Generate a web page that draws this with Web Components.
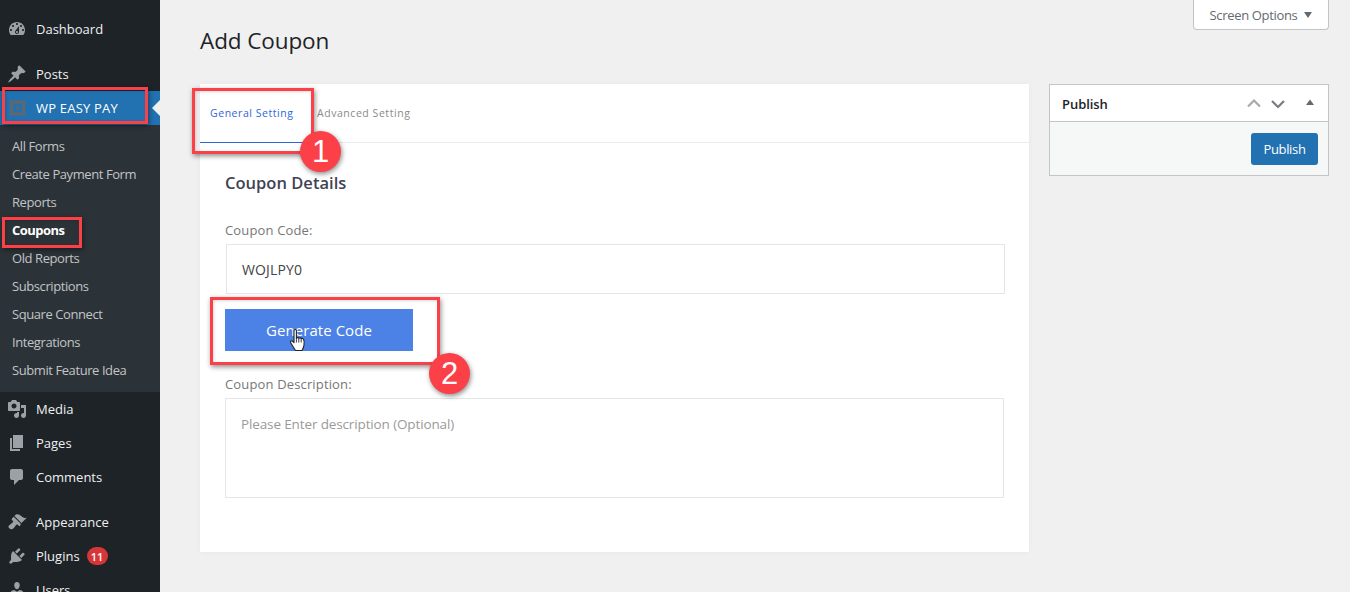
<!DOCTYPE html>
<html><head><meta charset="utf-8"><title>Add Coupon</title>
<style>
html,body{margin:0;height:592px;overflow:hidden;background:#f0f0f1;font-family:"Open Sans","Noto Sans",sans-serif;}
body{display:flex;align-items:stretch;position:relative}
</style></head>
<body>
<wp-sidebar>
  <wp-item icon="dashboard">Dashboard</wp-item>
  <wp-sep></wp-sep>
  <wp-item icon="pin">Posts</wp-item>
  <wp-item icon="square" current>WP EASY PAY</wp-item>
  <wp-submenu>
    <wp-subitem>All Forms</wp-subitem>
    <wp-subitem>Create Payment Form</wp-subitem>
    <wp-subitem>Reports</wp-subitem>
    <wp-subitem current>Coupons</wp-subitem>
    <wp-subitem>Old Reports</wp-subitem>
    <wp-subitem>Subscriptions</wp-subitem>
    <wp-subitem>Square Connect</wp-subitem>
    <wp-subitem>Integrations</wp-subitem>
    <wp-subitem>Submit Feature Idea</wp-subitem>
  </wp-submenu>
  <wp-item icon="media">Media</wp-item>
  <wp-item icon="page">Pages</wp-item>
  <wp-item icon="comment">Comments</wp-item>
  <wp-sep></wp-sep>
  <wp-item icon="brush">Appearance</wp-item>
  <wp-item icon="plugin" badge="11">Plugins</wp-item>
  <wp-item icon="users">Users</wp-item>
</wp-sidebar>
<wp-main>
  <coupon-card></coupon-card>
  <publish-box></publish-box>
</wp-main>
<anno-layer></anno-layer>
<script>
const ICONS={
dashboard:'<path d="M3.76 16h12.48c1.1-1.37 1.76-3.11 1.76-5 0-4.42-3.58-8-8-8s-8 3.58-8 8c0 1.89.66 3.63 1.76 5zM10 4c.55 0 1 .45 1 1s-.45 1-1 1-1-.45-1-1 .45-1 1-1zM6 6c.55 0 1 .45 1 1s-.45 1-1 1-1-.45-1-1 .45-1 1-1zm8 0c.55 0 1 .45 1 1s-.45 1-1 1-1-.45-1-1 .45-1 1-1zm-5.37 5.55L12 7v6c0 1.1-.9 2-2 2s-2-.9-2-2c0-.57.24-1.08.63-1.45zM4 10c.55 0 1 .45 1 1s-.45 1-1 1-1-.45-1-1 .45-1 1-1zm12 0c.55 0 1 .45 1 1s-.45 1-1 1-1-.45-1-1 .45-1 1-1zm-5 3c0-.55-.45-1-1-1s-1 .45-1 1 .45 1 1 1 1-.45 1-1z" fill-rule="evenodd"/>',
pin:'<path d="M10.44 3.02l1.82-1.82 6.36 6.35-1.83 1.82c-1.05-.68-2.48-.57-3.41.36l-.75.75c-.92.93-1.04 2.35-.35 3.41l-1.83 1.82-2.41-2.41-2.8 2.79c-.42.42-3.38 2.71-3.8 2.29s1.86-3.39 2.28-3.81l2.79-2.79L4.1 9.36l1.83-1.82c1.05.69 2.48.57 3.4-.36l.75-.75c.93-.92 1.05-2.35.36-3.41z"/>',
square:'<path fill-rule="evenodd" d="M3 2.500h15v15H3zM6 5.500v9h9v-9zM8.800 8.300h3.400v3.400H8.800z" fill="#63676c"/>',
media:'<path fill-rule="evenodd" d="M13 11V4c0-.55-.45-1-1-1h-1.67L9 1H5L3.67 3H2c-.55 0-1 .45-1 1v7c0 .55.45 1 1 1h10c.55 0 1-.45 1-1zM7 4.500c1.380 0 2.500 1.120 2.500 2.500S8.380 9.500 7 9.500 4.500 8.380 4.500 7 5.620 4.500 7 4.500zM14 6h5v10.500c0 1.380-1.120 2.500-2.500 2.500S14 17.880 14 16.500s1.120-2.500 2.500-2.500c.17 0 .34.02.5.05V9h-3V6zm-4 8.050V13h2v3.500c0 1.380-1.120 2.500-2.500 2.500S7 17.880 7 16.500 8.120 14 9.500 14c.17 0 .34.02.5.05z"/>',
page:'<path d="M6 15V2h10v13H6zm-1 1h8v2H3V5h2v11z"/>',
comment:'<path d="M5 2h9c1.1 0 2 .9 2 2v7c0 1.1-.9 2-2 2h-2l-5 5v-5H5c-1.1 0-2-.9-2-2V4c0-1.1.9-2 2-2z"/>',
brush:'<path d="M14.48 11.06L7.41 3.99l1.5-1.5c.5-.56 2.3-.47 3.51.32 1.21.8 1.43 1.28 2.91 2.1 1.18.64 2.45 1.26 4.45.85zm-.71.71L6.7 4.7 4.93 6.47c-.39.39-.39 1.02 0 1.41l1.06 1.06c.39.39.39 1.03 0 1.42-.6.6-1.43 1.11-2.21 1.69-.35.26-.7.53-1.01.84C1.43 13.23.91 14.96 2.32 16.37c1.41 1.41 3.15.89 4.5-.46.3-.31.58-.66.84-1.01.58-.78 1.09-1.61 1.69-2.21.39-.39 1.02-.39 1.41 0l1.06 1.06c.39.39 1.02.39 1.41 0z"/>',
plugin:'<path d="M13.11 4.36L9.87 7.6 8 5.73l3.24-3.24c.35-.34 1.05-.2 1.56.32.52.51.66 1.21.31 1.55zm-8 1.77l.91-1.12 9.01 9.01-1.19.84c-.71.71-2.63 1.16-3.82 1.16H6.14L4.9 17.26c-.59.59-1.54.59-2.12 0-.59-.58-.59-1.53 0-2.12l1.24-1.24v-3.88c0-1.13.4-3.19 1.09-3.89zm7.26 3.97l3.24-3.24c.34-.35 1.04-.21 1.55.31.52.51.66 1.21.31 1.55l-3.24 3.25z"/>',
users:'<path d="M10 9.25c-2.27 0-2.73-3.44-2.73-3.44C7 4.02 7.82 2 9.97 2c2.16 0 2.98 2.02 2.71 3.81 0 0-.41 3.44-2.68 3.44zm0 2.57L12.72 10c2.39 0 4.52 2.33 4.52 4.53v2.49s-3.65 1.13-7.24 1.13c-3.65 0-7.24-1.13-7.24-1.13v-2.49c0-2.25 1.94-4.48 4.47-4.48z"/>'
};
function def(name,css,html,init){
  customElements.define(name,class extends HTMLElement{
    connectedCallback(){
      if(this.shadowRoot)return;
      const r=this.attachShadow({mode:'open'});
      r.innerHTML='<style>'+css+'</style>'+(typeof html==='function'?html(this):html);
      if(init)init(this,r);
    }
  });
}
def('wp-sidebar',':host{display:flex;flex-direction:column;flex:none;width:160px;height:592px;overflow:hidden;background:#1d2327;padding-top:12px;box-sizing:border-box}','<slot></slot>');
def('wp-sep',':host{display:block;height:11px;flex:none}','');
def('wp-item',
 ':host{display:flex;align-items:center;flex:none;height:34px;position:relative;color:#f0f0f1;font-size:13px;letter-spacing:0}'+
 ':host([current]){background:#2271b1;color:#fff;letter-spacing:.2px}'+
 ':host([current])::after{content:"";position:absolute;right:0;top:50%;margin-top:-8px;border:8px solid transparent;border-right-color:#f0f0f1;border-left:0}'+
 'svg{width:20px;height:20px;margin:0 9px 0 7px;fill:#9ca1a7;flex:none}'+
 '.b{display:inline-flex;align-items:center;justify-content:center;width:21px;height:18px;border-radius:9px;background:#d63638;color:#fff;font-size:11px;font-weight:600;margin-left:7px;letter-spacing:0}',
 e=>`<svg viewBox="0 0 20 20">${ICONS[e.getAttribute('icon')]}</svg><slot></slot>${e.hasAttribute('badge')?`<span class="b">${e.getAttribute('badge')}</span>`:''}`);
def('wp-submenu',':host{display:block;flex:none;background:#2c3338;padding:7px 0 8px}','<slot></slot>');
def('wp-subitem',':host{display:flex;align-items:center;height:28px;padding-left:12px;color:#c3c4c7;font-size:13px;letter-spacing:-.42px}:host([current]){color:#fff;font-weight:700;letter-spacing:-.55px}','<slot></slot>');
def('wp-main',
 ':host{display:block;flex:1;min-width:0;position:relative;padding:0 21px 0 40px}'+
 '.top{display:flex;justify-content:space-between;align-items:flex-start;height:84px}'+
 'h1{margin:27px 0 0;font-size:22.5px;font-weight:400;line-height:28px;color:#1d2327;letter-spacing:-.1px}'+
 '.opt{display:flex;align-items:center;gap:7px;width:136px;height:30px;box-sizing:border-box;justify-content:center;background:#fff;border:1px solid #c3c4c7;border-top:0;border-radius:0 0 4px 4px;color:#646970;font-size:13px;letter-spacing:-.33px}'+
 '.opt i{border:4.5px solid transparent;border-top:6px solid #646970;border-bottom:0;display:block}'+
 '.cols{display:flex;gap:20px;align-items:flex-start}',
 '<div class="top"><h1>Add Coupon</h1><div class="opt">Screen Options <i></i></div></div><div class="cols"><slot></slot></div>');
def('coupon-card',
 ':host{display:block;width:829px;height:468px;flex:none;background:#fff;box-shadow:0 0 6px rgba(0,0,0,.04);color:#777;font-size:13px;letter-spacing:.15px}'+
 '.tabs{display:flex;height:59px;box-sizing:border-box;border-bottom:1px solid #e9ebf2;font-size:10.5px;letter-spacing:.55px}'+
 '.tab{display:flex;height:59px;box-sizing:border-box;align-items:flex-start;padding:22px 10px 0;color:#8a8a8a}'+
 '.tab.on{color:#2d68d8;border-bottom:1px solid #2d68d8;width:105px;margin-right:2px}'+
 '.body{padding:0 25px}'+
 'h2{margin:28px 0 0;font-size:16.5px;line-height:24px;font-weight:600;color:#3f4254;letter-spacing:.02px}'+
 'label{display:block;margin-top:26px;line-height:18px}'+
 '.in{margin:5px 0 0 1px;height:50px;box-sizing:border-box;border:1px solid #e6e6e6;padding:0 15px;display:flex;align-items:center;color:#444;width:779px;font-size:14px}'+
 '.btn{margin-top:15px;width:188px;height:42px;background:#4c82e6;color:#fff;font-size:15px;display:flex;align-items:center;justify-content:center;letter-spacing:.05px}'+
 'label.d{margin-top:24px}'+
 '.ta{margin-top:5px;height:100px;box-sizing:border-box;border:1px solid #e6e6e6;padding:16px 15px;color:#9a9a9a;font-size:13.5px;line-height:18px;width:779px;letter-spacing:-.13px}',
 '<div class="tabs"><div class="tab on">General Setting</div><div class="tab">Advanced Setting</div></div><div class="body"><h2>Coupon Details</h2><label>Coupon Code:</label><div class="in">WOJLPY0</div><div class="btn">Generate Code</div><label class="d">Coupon Description:</label><div class="ta">Please Enter description (Optional)</div></div>');
def('publish-box',
 ':host{display:block;width:280px;height:92px;box-sizing:border-box;flex:none;background:#f6f7f7;border:1px solid #c3c4c7}'+
 '.h{display:flex;align-items:center;height:37px;padding-top:1px;box-sizing:border-box;background:#fff;border-bottom:1px solid #c3c4c7;padding-left:12px;font-size:13px;font-weight:600;color:#1d2327;letter-spacing:-.05px}'+
 '.h span{flex:1}svg{display:block}'+
 '.f{display:flex;justify-content:flex-end;padding:11px 10px 0}'+
 '.b{display:flex;align-items:center;justify-content:center;width:67px;height:32px;background:#2271b1;color:#fff;border-radius:3px;font-size:13px;letter-spacing:-.35px}',
 '<div class="h"><span>Publish</span><svg width="82" height="20" viewBox="0 0 82 20" fill="none"><path d="M2 12.500l6-6 6 6" stroke="#a7aaad" stroke-width="2.200"/><path d="M26 7l6 6 6-6" stroke="#787c82" stroke-width="2.200"/><path d="M60 11l4-5.500 4 5.500z" fill="#646970"/></svg></div><div class="f"><div class="b">Publish</div></div>');
def('anno-box',':host{position:absolute;display:block;box-sizing:border-box;border:3px solid #fb4048;box-shadow:1px 2px 5px rgba(0,0,0,.45),inset 1px 1px 3px rgba(0,0,0,.15)}','');
def('anno-num',':host{position:absolute;display:flex;align-items:center;justify-content:center;width:41px;height:41px;border-radius:50%;background:#fb4048;color:#fff;font:400 31px/1 "Liberation Sans",sans-serif;box-shadow:1px 2px 5px rgba(0,0,0,.45)}','<slot></slot>');
def('anno-layer',':host{position:absolute;inset:0;display:block;pointer-events:none}',
 '<anno-box style="left:2px;top:87px;width:146px;height:37px"></anno-box>'+
 '<anno-box style="left:2px;top:217px;width:80px;height:31px"></anno-box>'+
 '<anno-box style="left:192px;top:88px;width:122px;height:66px"></anno-box>'+
 '<anno-box style="left:210px;top:297px;width:230px;height:68px"></anno-box>'+
 '<anno-num style="left:300px;top:131px">1</anno-num>'+
 '<anno-num style="left:429px;top:353px">2</anno-num>'+
 '<svg style="position:absolute;left:289px;top:328px" width="20" height="26" viewBox="0 0 20 26"><path d="M5 2.500c0-1.400 2.400-1.400 2.400 0V10c.9-.6 2-.5 2.400.2.8-.6 2-.4 2.400.4.9-.5 2.100-.2 2.400.7.5 1 .6 3.400.4 5.700-.2 2-1 3.700-2 5.500H6.500C5.500 21 3.200 17.300 1.700 14.800c-.8-1.400.5-2.500 1.700-1.600L5 14.700z" fill="#fff" stroke="#222" stroke-width="1.100" stroke-linejoin="round"/><path d="M7.400 10v4.500M9.800 10.200v4.300M12.200 10.600v3.900" stroke="#222" stroke-width=".9"/></svg>');
</script>
</body></html>
